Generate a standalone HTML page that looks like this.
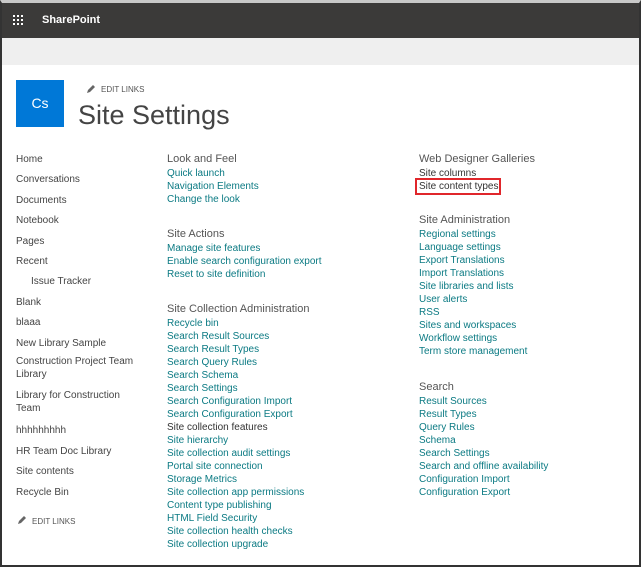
<!DOCTYPE html>
<html><head><style>
*{margin:0;padding:0;box-sizing:border-box}
body{width:641px;height:567px;overflow:hidden;background:#fff;font-family:"Liberation Sans",sans-serif;position:relative}
.frame{position:absolute;left:0;top:0;width:641px;height:567px;border:2px solid #333;border-top:3px solid #c8c8c8}
.bar{position:absolute;left:2px;top:3px;width:637px;height:35px;background:#3b3a39}
.band{position:absolute;left:2px;top:38px;width:637px;height:27px;background:#efefef}
.t{position:absolute;font-size:10px;line-height:13px;white-space:nowrap}
.nav{color:#444}
.h{color:#555;font-size:11px}
.l{color:#0b7a83}
.d{color:#333}
</style></head><body>
<div class="bar"></div>
<div class="band"></div>
<svg style="position:absolute;left:13px;top:15px" width="12" height="12"><g fill="#fff">
<rect x="0" y="0" width="2" height="2"/><rect x="4" y="0" width="2" height="2"/><rect x="8" y="0" width="2" height="2"/>
<rect x="0" y="4" width="2" height="2"/><rect x="4" y="4" width="2" height="2"/><rect x="8" y="4" width="2" height="2"/>
<rect x="0" y="8" width="2" height="2"/><rect x="4" y="8" width="2" height="2"/><rect x="8" y="8" width="2" height="2"/></g></svg>
<div class="t" style="left:42px;top:14px;color:#fff;font-weight:bold;font-size:11px">SharePoint</div>
<div style="position:absolute;left:16px;top:80px;width:48px;height:47px;background:#0078d7;color:#fff;font-size:14px;text-align:center;line-height:47px">Cs</div>
<svg style="position:absolute;left:86px;top:84px" width="10" height="10"><path d="M1 9 L2 6 L7 1 L9 3 L4 8 Z" fill="#666"/></svg>
<div class="t" style="left:101px;top:83px;font-size:8px;color:#555">EDIT LINKS</div>
<div class="t" style="left:78px;top:99px;font-size:27px;line-height:32px;color:#444">Site Settings</div>

<div class="t nav" style="left:16px;top:150px;line-height:20.4px">Home<br>Conversations<br>Documents<br>Notebook<br>Pages<br>Recent<br><span style="padding-left:15px">Issue Tracker</span><br>Blank<br>blaaa<br>New Library Sample</div>
<div class="t nav" style="left:16px;top:355px">Construction Project Team<br>Library</div>
<div class="t nav" style="left:16px;top:389px">Library for Construction<br>Team</div>
<div class="t nav" style="left:16px;top:421px;line-height:20.5px">hhhhhhhhh<br>HR Team Doc Library<br>Site contents<br>Recycle Bin</div>
<svg style="position:absolute;left:17px;top:515px" width="10" height="10"><path d="M1 9 L2 6 L7 1 L9 3 L4 8 Z" fill="#666"/></svg>
<div class="t" style="left:32px;top:515px;font-size:8px;color:#555">EDIT LINKS</div>

<div class="t h" style="left:167px;top:153px">Look and Feel</div>
<div class="t l" style="left:167px;top:167px">Quick launch<br>Navigation Elements<br>Change the look</div>
<div class="t h" style="left:167px;top:228px">Site Actions</div>
<div class="t l" style="left:167px;top:242px">Manage site features<br>Enable search configuration export<br>Reset to site definition</div>
<div class="t h" style="left:167px;top:303px">Site Collection Administration</div>
<div class="t l" style="left:167px;top:317px">Recycle bin<br>Search Result Sources<br>Search Result Types<br>Search Query Rules<br>Search Schema<br>Search Settings<br>Search Configuration Import<br>Search Configuration Export<br><span class="d">Site collection features</span><br>Site hierarchy<br>Site collection audit settings<br>Portal site connection<br>Storage Metrics<br>Site collection app permissions<br>Content type publishing<br>HTML Field Security<br>Site collection health checks<br>Site collection upgrade</div>

<div class="t h" style="left:419px;top:153px">Web Designer Galleries</div>
<div class="t d" style="left:419px;top:167px">Site columns<br>Site content types</div>
<div style="position:absolute;left:415px;top:178px;width:86px;height:17px;border:2px solid #e0262b"></div>
<div class="t h" style="left:419px;top:214px">Site Administration</div>
<div class="t l" style="left:419px;top:228px">Regional settings<br>Language settings<br>Export Translations<br>Import Translations<br>Site libraries and lists<br>User alerts<br>RSS<br>Sites and workspaces<br>Workflow settings<br>Term store management</div>
<div class="t h" style="left:419px;top:381px">Search</div>
<div class="t l" style="left:419px;top:395px">Result Sources<br>Result Types<br>Query Rules<br>Schema<br>Search Settings<br>Search and offline availability<br>Configuration Import<br>Configuration Export</div>
<div class="frame"></div>
</body></html>
